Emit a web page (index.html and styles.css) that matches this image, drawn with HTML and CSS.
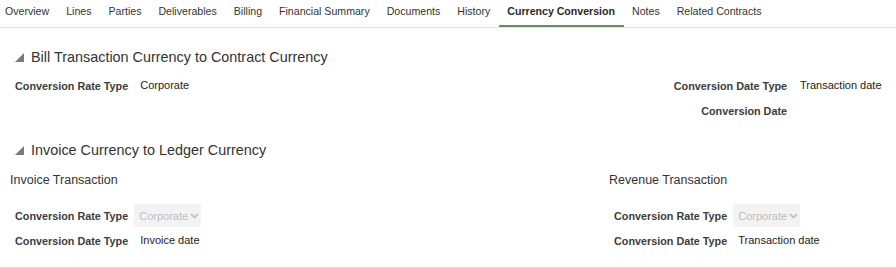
FILE: index.html
```html
<!DOCTYPE html>
<html>
<head>
<meta charset="utf-8">
<link rel="stylesheet" href="styles.css">
</head>
<body>
<div class="page">
  <nav class="tabs">
    <span class="tab">Overview</span>
    <span class="tab">Lines</span>
    <span class="tab">Parties</span>
    <span class="tab">Deliverables</span>
    <span class="tab">Billing</span>
    <span class="tab">Financial Summary</span>
    <span class="tab">Documents</span>
    <span class="tab">History</span>
    <span class="tab active">Currency Conversion</span>
    <span class="tab">Notes</span>
    <span class="tab">Related Contracts</span>
  </nav>

  <section class="section">
    <h2 class="heading"><svg class="tri" width="9" height="9" viewBox="0 0 9 9"><polygon points="9,0 9,9 0,9" fill="#7a7a7a"/></svg>Bill Transaction Currency to Contract Currency</h2>
    <div class="split">
      <div class="form">
        <div class="label">Conversion Rate Type</div><div class="value">Corporate</div>
      </div>
      <div class="form right">
        <div class="label">Conversion Date Type</div><div class="value">Transaction date</div>
        <div class="label">Conversion Date</div><div class="value"></div>
      </div>
    </div>
  </section>

  <section class="section second">
    <h2 class="heading"><svg class="tri" width="9" height="9" viewBox="0 0 9 9"><polygon points="9,0 9,9 0,9" fill="#7a7a7a"/></svg>Invoice Currency to Ledger Currency</h2>
    <div class="cols">
      <div class="col left-col">
        <h3 class="sub">Invoice Transaction</h3>
        <div class="form">
          <div class="label">Conversion Rate Type</div>
          <div class="select"><span class="sel-text">Corporate</span><svg class="chev" width="9" height="6" viewBox="0 0 9 6"><path d="M1 1 L4.5 4.5 L8 1" fill="none" stroke="#c4c4c4" stroke-width="1.8"/></svg></div>
          <div class="label">Conversion Date Type</div><div class="value">Invoice date</div>
        </div>
      </div>
      <div class="col right-col">
        <h3 class="sub">Revenue Transaction</h3>
        <div class="form">
          <div class="label">Conversion Rate Type</div>
          <div class="select"><span class="sel-text">Corporate</span><svg class="chev" width="9" height="6" viewBox="0 0 9 6"><path d="M1 1 L4.5 4.5 L8 1" fill="none" stroke="#c4c4c4" stroke-width="1.8"/></svg></div>
          <div class="label">Conversion Date Type</div><div class="value">Transaction date</div>
        </div>
      </div>
    </div>
  </section>
</div>
</body>
</html>
```
FILE: styles.css
```css
html, body {
  margin: 0;
  padding: 0;
  background: #ffffff;
}
body {
  font-family: "Liberation Sans", Arial, sans-serif;
  color: #333333;
  width: 896px;
  height: 268px;
  overflow: hidden;
}
.page {
  height: 267px;
  border-bottom: 1px solid #d4dce2;
}
.tabs {
  display: flex;
  height: 27px;
  border-bottom: 1px solid #e2e2e2;
  margin-left: -3.5px;
}
.tab {
  font-size: 10.6px;
  line-height: 22px;
  padding: 0 8.5px 3px;
  border-bottom: 2px solid transparent;
  color: #333333;
  white-space: nowrap;
}
.tab.active {
  border-bottom-color: #6b8a60;
  font-weight: bold;
  color: #2a2a2a;
}
.section {
  margin: 0;
}
.heading {
  display: flex;
  align-items: center;
  margin: 19px 0 0;
  padding-left: 15px;
  font-size: 14.4px;
  font-weight: normal;
  line-height: 20px;
  color: #333333;
}
.tri {
  margin-right: 7px;
  margin-top: 1px;
}
.split {
  display: flex;
  justify-content: space-between;
  margin-top: 6px;
  padding-left: 15px;
}
.form {
  display: grid;
  grid-template-columns: auto auto;
  grid-auto-rows: 25px;
  align-items: center;
  column-gap: 6px;
  justify-content: start;
}
.form.right {
  grid-template-columns: auto 84px;
  column-gap: 13px;
  margin-right: 12px;
}
.form.right .label {
  text-align: right;
}
.form.right .value {
  padding-left: 0;
}
.label {
  font-size: 10.8px;
  font-weight: bold;
  color: #3c3c3c;
  white-space: nowrap;
}
.value {
  font-size: 11px;
  color: #222222;
  padding-left: 6px;
  white-space: nowrap;
  position: relative;
  top: -1px;
}
.second .heading {
  margin-top: 17px;
}
.cols {
  display: flex;
  padding-left: 10px;
}
.left-col {
  width: 599px;
}
.right-col {
  flex: 1;
}
.sub {
  margin: 11px 0 0;
  font-size: 12.5px;
  font-weight: normal;
  line-height: 18px;
  color: #333333;
}
.col .form {
  margin-top: 14px;
  padding-left: 5px;
}
.right-col .value {
  padding-left: 5px;
}
.select {
  display: flex;
  align-items: center;
  width: 67px;
  height: 23px;
  box-sizing: border-box;
  padding-left: 5px;
  background: #f3f3f3;
  border-radius: 2px;
  overflow: hidden;
}
.sel-text {
  font-size: 11px;
  color: #bdbdbd;
  width: 49px;
  overflow: hidden;
  white-space: nowrap;
}
.chev {
  margin-left: 2px;
  flex: none;
}
```
